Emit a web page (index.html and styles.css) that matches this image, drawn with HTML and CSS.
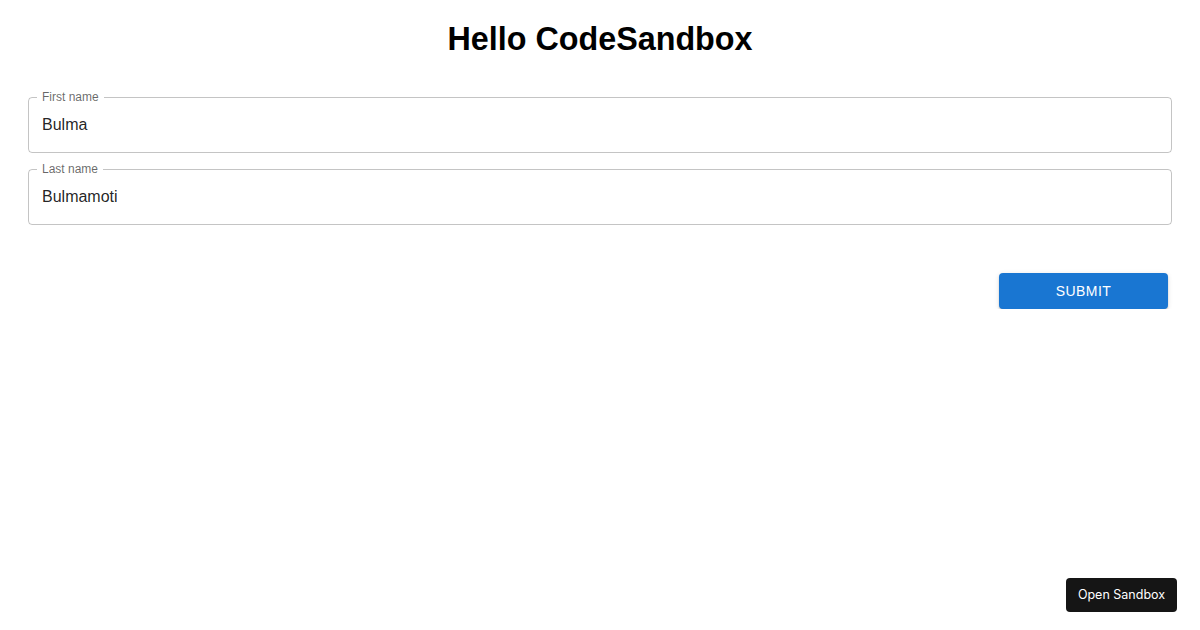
FILE: index.html
```html
<!DOCTYPE html>
<html lang="en">
<head>
<meta charset="utf-8">
<title>Hello CodeSandbox</title>
<link rel="stylesheet" href="styles.css">
</head>
<body>
<div class="app">
  <h1 class="title">Hello CodeSandbox</h1>
  <form class="form">
    <fieldset class="field">
      <legend class="field-label">First name</legend>
      <input class="field-input" type="text" value="Bulma">
    </fieldset>
    <fieldset class="field">
      <legend class="field-label">Last name</legend>
      <input class="field-input" type="text" value="Bulmamoti">
    </fieldset>
    <div class="actions">
      <button class="submit" type="button">Submit</button>
    </div>
  </form>
</div>
<a class="open-sandbox" href="#">Open Sandbox</a>
</body>
</html>
```

FILE: styles.css
```css
* { box-sizing: border-box; }

html, body {
  margin: 0;
  padding: 0;
  background: #fff;
}

body {
  font-family: "Liberation Sans", Arial, Helvetica, sans-serif;
  color: rgba(0, 0, 0, 0.87);
}

.app {
  padding: 0 28px;
}

.title {
  margin: 21px 0 0;
  font-family: "Liberation Sans", Arial, sans-serif;
  font-size: 32.3px;
  font-weight: 700;
  line-height: 37px;
  text-align: center;
  color: #000;
}

.form {
  display: flex;
  flex-direction: column;
  gap: 10px;
  margin-top: 33px;
}

.field {
  margin: 0;
  padding: 0 8px;
  border: 1px solid rgba(0, 0, 0, 0.23);
  border-radius: 4px;
  min-width: 0;
}

.field-label {
  padding: 0 5px;
  font-size: 12px;
  line-height: 12px;
  height: 12px;
  color: rgba(0, 0, 0, 0.6);
}

.field-input {
  display: block;
  width: 100%;
  margin: 0;
  border: 0;
  outline: none;
  background: transparent;
  padding: 11px 5px 16px;
  height: 49px;
  font-family: "Liberation Sans", Arial, sans-serif;
  font-size: 16px;
  line-height: 22px;
  color: rgba(0, 0, 0, 0.87);
}

.actions {
  display: flex;
  justify-content: flex-end;
  padding-right: 4px;
  margin-top: 38px;
}

.submit {
  width: 169px;
  height: 36px;
  border: 0;
  border-radius: 4px;
  background: #1976d2;
  color: #fff;
  font-family: "Liberation Sans", Arial, sans-serif;
  font-size: 14px;
  font-weight: 400;
  letter-spacing: 0.4px;
  text-transform: uppercase;
  box-shadow: 0 3px 1px -2px rgba(0,0,0,0.2), 0 2px 2px 0 rgba(0,0,0,0.14), 0 1px 5px 0 rgba(0,0,0,0.12);
  cursor: pointer;
}

.open-sandbox {
  position: fixed;
  right: 23px;
  bottom: 18px;
  height: 34px;
  width: 111px;
  display: flex;
  align-items: center;
  justify-content: center;
  padding-bottom: 2px;
  background: #151515;
  color: #fff;
  border-radius: 4px;
  font-family: Inter, "Liberation Sans", Arial, sans-serif;
  font-size: 12.5px;
  text-decoration: none;
}
```
